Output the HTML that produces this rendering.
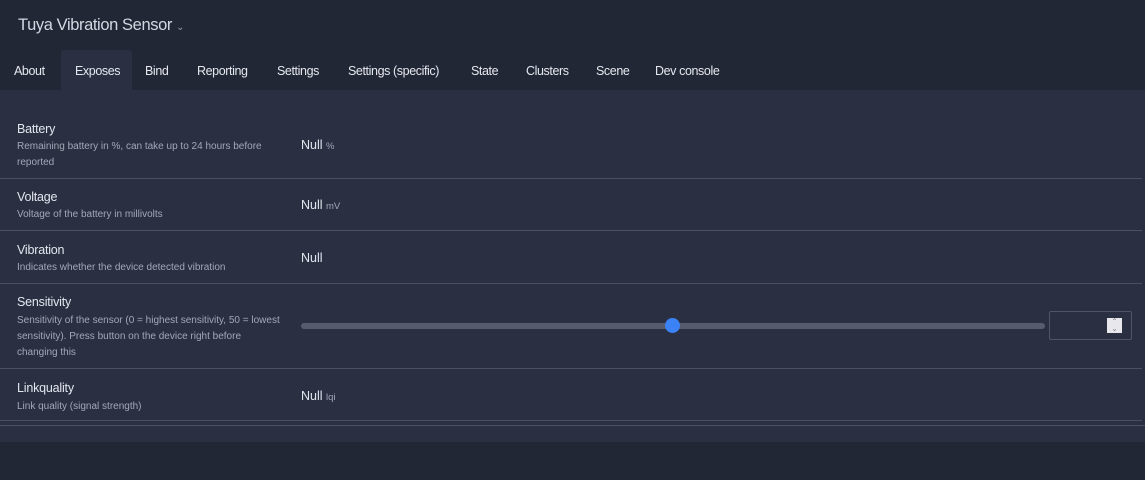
<!DOCTYPE html>
<html><head><style>
body{margin:0;width:1145px;height:480px;background:#222736;font-family:"Liberation Sans",sans-serif;position:relative;overflow:hidden;color:#e3e6ee}
.t{position:absolute;white-space:nowrap}
.title{left:18px;top:16px;font-size:16.5px;color:#d3d7e0;letter-spacing:-0.4px}
.tab{top:64px;font-size:12.5px;color:#e6e8ef;letter-spacing:-0.4px}
.active{position:absolute;left:61px;top:50px;width:71px;height:40px;background:#2a3042;border-radius:3px 3px 0 0}
.content{position:absolute;left:0;top:90px;width:1145px;height:352px;background:#2a3042}
.line{position:absolute;left:0;width:1142px;height:1px;background:#4a5061}
.lbl{font-size:12.5px;color:#e3e6ee;left:17px;letter-spacing:-0.2px}
.desc{font-size:10px;color:#a3a8b6;left:17px;line-height:16px;white-space:normal;width:268px}
.val{left:301px;font-size:12.5px;color:#e3e6ee}
.val small{font-size:9.5px;color:#a3a8b6}
</style></head><body>
<div class="t title">Tuya Vibration Sensor <span style="font-size:10px;color:#999">&#8964;</span></div>
<div class="active"></div>
<div class="t tab" style="left:14px">About</div>
<div class="t tab" style="left:75px">Exposes</div>
<div class="t tab" style="left:145px">Bind</div>
<div class="t tab" style="left:197px">Reporting</div>
<div class="t tab" style="left:277px">Settings</div>
<div class="t tab" style="left:348px">Settings (specific)</div>
<div class="t tab" style="left:471px">State</div>
<div class="t tab" style="left:526px">Clusters</div>
<div class="t tab" style="left:596px">Scene</div>
<div class="t tab" style="left:655px">Dev console</div>
<div class="content"></div>
<div class="t lbl" style="top:122px">Battery</div>
<div class="t desc" style="top:139px">Remaining battery in %, can take up to 24 hours before reported</div>
<div class="t val" style="top:138px">Null <small>%</small></div>
<div class="line" style="top:178px"></div>
<div class="t lbl" style="top:190px">Voltage</div>
<div class="t desc" style="top:207px">Voltage of the battery in millivolts</div>
<div class="t val" style="top:198px">Null <small>mV</small></div>
<div class="line" style="top:230px"></div>
<div class="t lbl" style="top:243px">Vibration</div>
<div class="t desc" style="top:260px">Indicates whether the device detected vibration</div>
<div class="t val" style="top:251px">Null</div>
<div class="line" style="top:283px"></div>
<div class="t lbl" style="top:295px">Sensitivity</div>
<div class="t desc" style="top:313px;width:290px">Sensitivity of the sensor (0 = highest sensitivity, 50 = lowest<br>sensitivity). Press button on the device right before<br>changing this</div>
<div style="position:absolute;left:301px;top:323px;width:744px;height:6px;background:#565c6b;border-radius:3px"></div>
<div style="position:absolute;left:665px;top:318px;width:15px;height:15px;background:#3b82f6;border-radius:50%"></div>
<div style="position:absolute;left:1049px;top:311px;width:81px;height:27px;border:1px solid #4f5566;border-radius:2px"></div>
<div style="position:absolute;left:1107px;top:318px;width:15px;height:15px;background:#e8e8ec;color:#888;font-size:8px;line-height:7px;text-align:center">&#8963;<br>&#8964;</div>
<div class="line" style="top:368px"></div>
<div class="t lbl" style="top:381px">Linkquality</div>
<div class="t desc" style="top:399px">Link quality (signal strength)</div>
<div class="t val" style="top:389px">Null <small>lqi</small></div>
<div class="line" style="top:420px"></div>
<div class="line" style="top:425px;width:1145px"></div>
</body></html>
